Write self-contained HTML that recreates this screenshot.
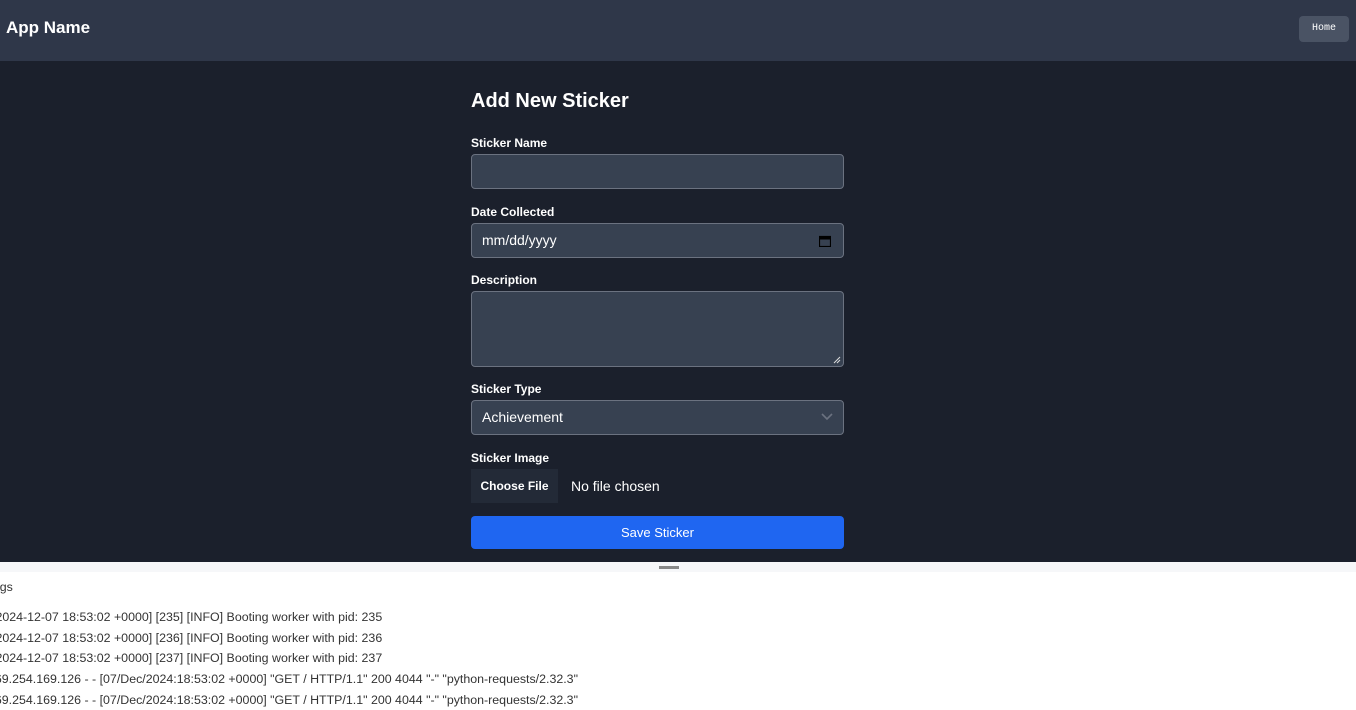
<!DOCTYPE html>
<html><head><meta charset="utf-8"><style>
*{box-sizing:border-box;margin:0;padding:0}
body{width:1356px;height:710px;overflow:hidden;font-family:"Liberation Sans",sans-serif;background:#fff}
.top{height:61px;background:#2f3749;position:relative}
.top .t{position:absolute;left:6px;top:18px;color:#fff;font-weight:bold;font-size:17px}
.top .h{position:absolute;left:1299px;top:16px;width:50px;height:26px;background:#4a5364;border-radius:4px;color:#fff;font-family:"Liberation Mono",monospace;font-size:10px;text-align:center;line-height:26px}
.main{background:#1b202c;height:501px;position:relative}
h1{position:absolute;left:471px;top:29px;color:#fff;font-size:20px}
.l{position:absolute;left:471px;color:#fff;font-weight:bold;font-size:12px}
.i{position:absolute;left:471px;width:373px;background:#374151;border:1px solid #6b7280;border-radius:4px;color:#fff;font-size:14px;padding-left:10px}
.btn{position:absolute;left:471px;top:455px;width:373px;height:33px;background:#1f66f1;border-radius:4px;color:#fff;text-align:center;line-height:33px;font-size:13px}
.bar{height:10px;background:#f6f7f9;position:relative}
.bar div{position:absolute;left:659px;top:4px;width:20px;height:3px;background:#888}
.logs{font-size:12.4px;color:#333;position:relative}
.logs div{position:absolute;left:-8px;white-space:nowrap}
</style></head><body>
<div class="top"><div class="t">App Name</div><div class="h">Home</div></div>
<div class="main">
<h1>Add New Sticker</h1>
<div class="l" style="top:75px">Sticker Name</div>
<div class="i" style="top:93px;height:35px"></div>
<div class="l" style="top:144px">Date Collected</div>
<div class="i" style="top:162px;height:35px;line-height:33px">mm/dd/yyyy<svg style="position:absolute;right:12px;top:11px" width="12" height="12" viewBox="0 0 12 12"><rect x="0.5" y="1.5" width="11" height="10" fill="none" stroke="#000" stroke-width="1.2"/><rect x="0.5" y="1.5" width="11" height="3" fill="#000"/></svg></div>
<div class="l" style="top:212px">Description</div>
<div class="i" style="top:230px;height:76px"><svg style="position:absolute;right:2px;bottom:2px" width="8" height="8" viewBox="0 0 8 8"><path d="M7 1L1 7M7 4L4 7" stroke="#ddd" stroke-width="1"/></svg></div>
<div class="l" style="top:321px">Sticker Type</div>
<div class="i" style="top:339px;height:35px;line-height:33px">Achievement<svg style="position:absolute;right:10px;top:12px" width="12" height="8" viewBox="0 0 12 8"><path d="M1 1l5 5 5-5" fill="none" stroke="#6b7280" stroke-width="1.6"/></svg></div>
<div class="l" style="top:390px">Sticker Image</div>
<div style="position:absolute;left:471px;top:408px;width:87px;height:34px;background:#232a37;color:#fff;font-weight:bold;font-size:12px;text-align:center;line-height:34px">Choose File</div>
<div style="position:absolute;left:571px;top:417px;color:#fff;font-size:14px">No file chosen</div>
<div class="btn">Save Sticker</div>
</div>
<div class="bar"><div></div></div>
<div class="logs">
<div style="top:8px;left:-14px">Logs</div>
<div style="top:38px">[2024-12-07 18:53:02 +0000] [235] [INFO] Booting worker with pid: 235</div>
<div style="top:59px">[2024-12-07 18:53:02 +0000] [236] [INFO] Booting worker with pid: 236</div>
<div style="top:79px">[2024-12-07 18:53:02 +0000] [237] [INFO] Booting worker with pid: 237</div>
<div style="top:100px;left:-12px">169.254.169.126 - - [07/Dec/2024:18:53:02 +0000] "GET / HTTP/1.1" 200 4044 "-" "python-requests/2.32.3"</div>
<div style="top:121px;left:-12px">169.254.169.126 - - [07/Dec/2024:18:53:02 +0000] "GET / HTTP/1.1" 200 4044 "-" "python-requests/2.32.3"</div>
</div>
</body></html>
